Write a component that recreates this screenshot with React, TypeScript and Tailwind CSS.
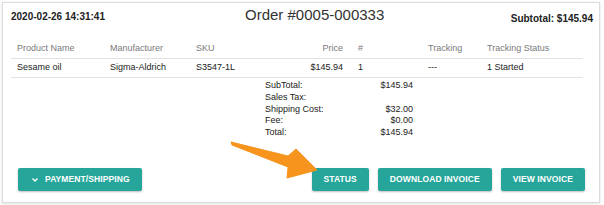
import React from "react";

const columns = [
  { label: "Product Name", value: "Sesame oil", cls: "pl-[6px]" },
  { label: "Manufacturer", value: "Sigma-Aldrich", cls: "pl-[6px]" },
  { label: "SKU", value: "S3547-1L", cls: "pl-[6px]" },
  { label: "Price", value: "$145.94", cls: "pr-[9px] justify-end" },
  { label: "#", value: "1", cls: "pl-[6px]" },
  { label: "Tracking", value: "---", cls: "pl-[6px]" },
  { label: "Tracking Status", value: "1 Started", cls: "pl-[6px]" },
];

const totals = [
  { label: "SubTotal:", value: "$145.94" },
  { label: "Sales Tax:", value: "" },
  { label: "Shipping Cost:", value: "$32.00" },
  { label: "Fee:", value: "$0.00" },
  { label: "Total:", value: "$145.94" },
];

function TealButton({ children }: { children: React.ReactNode }) {
  return (
    <button className="h-[23px] rounded-[2px] bg-[#26a69a] px-[12px] flex items-center gap-[6px] text-white text-[8.5px] font-bold tracking-[0.1px] uppercase shadow-[0_1px_2px_rgba(0,0,0,0.25)]">
      {children}
    </button>
  );
}

export default function App() {
  return (
    <div className="relative w-[604px] h-[205px] bg-white p-[2px] font-['Liberation_Sans',Arial,sans-serif] text-[#333]">
      <div className="w-[598px] h-[201px] border border-[#dcdcdc] bg-white shadow-[0_1px_3px_rgba(0,0,0,0.12)] flex flex-col">
        {/* header */}
        <div className="grid grid-cols-[234px_142px_1fr] h-[36px] pl-[8px] pr-[6px] items-start">
          <div className="mt-[8px] text-[10px] leading-[12px] font-bold text-[#222]">2020-02-26 14:31:41</div>
          <div className="mt-[3px] text-[15px] leading-[18px] text-[#333] whitespace-nowrap">Order #0005-000333</div>
          <div className="mt-[10px] text-[10px] leading-[12px] font-bold text-[#222] text-right">Subtotal: $145.94</div>
        </div>

        {/* items table */}
        <div className="ml-[8px] w-[572px] text-[9px]">
          <div className="grid grid-cols-[93px_86px_100px_62px_70px_59px_102px] h-[20px] border-b border-[#e2e2e2] text-[#7a7a7a]">
            {columns.map((c) => (
              <div key={c.label} className={`flex items-center ${c.cls}`}>{c.label}</div>
            ))}
          </div>
          <div className="grid grid-cols-[93px_86px_100px_62px_70px_59px_102px] h-[19px] border-b border-[#e2e2e2] text-[#222]">
            {columns.map((c) => (
              <div key={c.label} className={`flex items-center ${c.cls}`}>{c.value}</div>
            ))}
          </div>
        </div>

        {/* totals */}
        <div className="ml-[262px] mt-[2px] w-[148px] grid grid-cols-[1fr_auto] text-[9px] leading-[11.75px] text-[#222]">
          {totals.map((t) => (
            <React.Fragment key={t.label}>
              <div>{t.label}</div>
              <div className="text-right">{t.value}</div>
            </React.Fragment>
          ))}
        </div>

        {/* actions */}
        <div className="mt-auto mb-[11px] pl-[15px] pr-[14px] flex items-center justify-between">
          <TealButton>
            <svg width="8" height="6" viewBox="0 0 8 6" className="ml-[1px]">
              <polyline points="1.5,1.5 4,4 6.5,1.5" fill="none" stroke="white" strokeWidth="1.4" />
            </svg>
            Payment/Shipping
          </TealButton>
          <div className="flex items-center gap-[9px]">
            <TealButton>Status</TealButton>
            <TealButton>Download Invoice</TealButton>
            <TealButton>View Invoice</TealButton>
          </div>
        </div>
      </div>

      {/* annotation arrow */}
      <svg className="absolute left-0 top-0 pointer-events-none" width="604" height="205" viewBox="0 0 604 205">
        <polygon
          points="231,142 288,156 296,149 317,170 287,178 288,167 232,145"
          fill="#f7941d"
          stroke="#f7941d"
          strokeWidth="1"
          strokeLinejoin="round"
        />
      </svg>
    </div>
  );
}
